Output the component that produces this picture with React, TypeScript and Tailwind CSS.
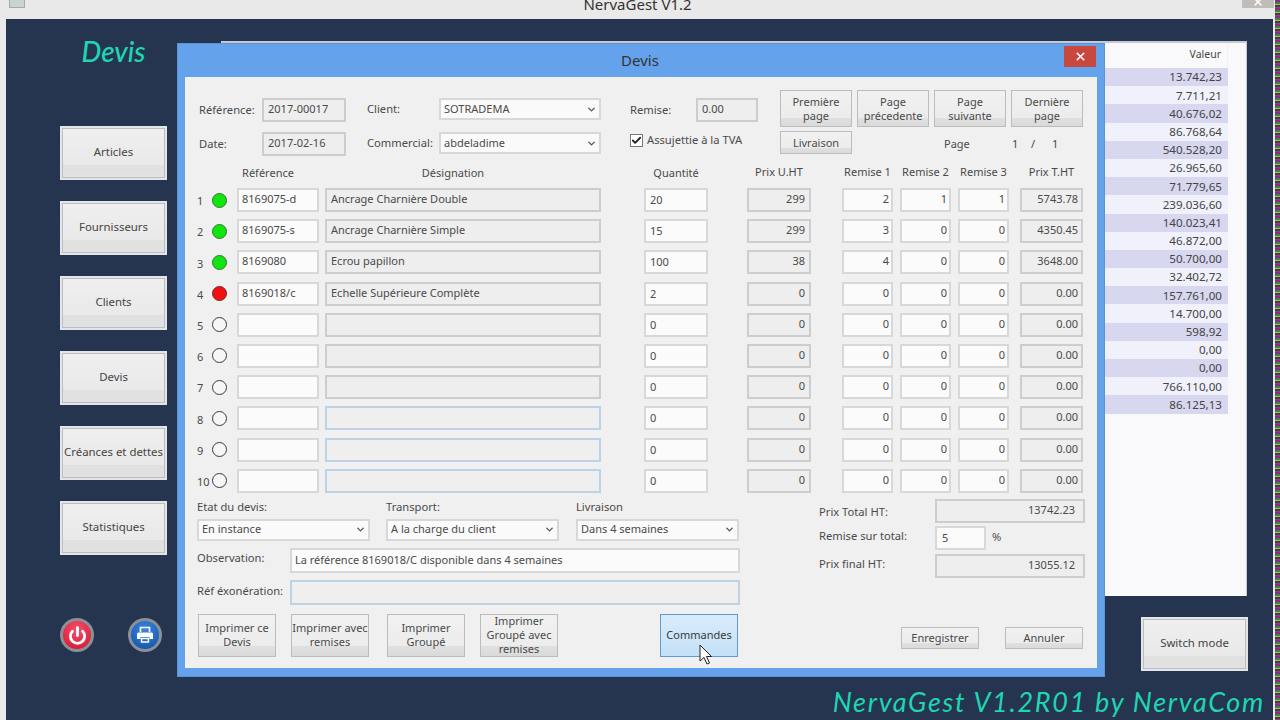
import React from 'react';
import { ChevronDown, Check, Power, X } from 'lucide-react';

const font = 'font-["Noto_Sans","Liberation_Sans",sans-serif]';
const script = 'font-["Lato","Open_Sans",sans-serif] italic text-[#1fd6b0]';

const tableValues = [
  '13.742,23', '7.711,21', '40.676,02', '86.768,64', '540.528,20', '26.965,60',
  '71.779,65', '239.036,60', '140.023,41', '46.872,00', '50.700,00', '32.402,72',
  '157.761,00', '14.700,00', '598,92', '0,00', '0,00', '766.110,00', '86.125,13',
];
const clippedRows = [3, 7, 8, 18];

interface LineData {
  ref: string;
  name: string;
  qty: string;
  price: string;
  r1: string;
  r2: string;
  r3: string;
  total: string;
  status: 'green' | 'red' | 'none';
}

const lines: LineData[] = [
  { ref: '8169075-d', name: 'Ancrage Charnière Double', qty: '20', price: '299', r1: '2', r2: '1', r3: '1', total: '5743.78', status: 'green' },
  { ref: '8169075-s', name: 'Ancrage Charnière Simple', qty: '15', price: '299', r1: '3', r2: '0', r3: '0', total: '4350.45', status: 'green' },
  { ref: '8169080', name: 'Ecrou papillon', qty: '100', price: '38', r1: '4', r2: '0', r3: '0', total: '3648.00', status: 'green' },
  { ref: '8169018/c', name: 'Echelle Supérieure Complète', qty: '2', price: '0', r1: '0', r2: '0', r3: '0', total: '0.00', status: 'red' },
  ...Array.from({ length: 6 }, () => ({ ref: '', name: '', qty: '0', price: '0', r1: '0', r2: '0', r3: '0', total: '0.00', status: 'none' as const })),
];

function Field({ className = '', children }: { className?: string; children?: React.ReactNode }) {
  return <div className={`h-6 shrink-0 border-2 text-[11px] leading-[17px] whitespace-nowrap overflow-hidden ${className}`}>{children}</div>;
}

const white = 'bg-[#fbfbfb] border-[#d8d8d8]';
const gray = 'bg-[#eeeeee] border-[#cdcdcd]';
const blue = 'bg-[#efefef] border-[#bdd2e4]';

function Select({ className = '', children }: { className?: string; children: React.ReactNode }) {
  return (
    <div className={`h-[22px] shrink-0 flex items-center justify-between pl-[3px] pr-[2px] bg-[#fafafa] border-2 border-[#d8d8d8] text-[11px] whitespace-nowrap ${className}`}>
      <span>{children}</span>
      <ChevronDown size={11} strokeWidth={3} className="text-[#555]" />
    </div>
  );
}

function WinButton({ className = '', children }: { className?: string; children: React.ReactNode }) {
  return (
    <div className={`shrink-0 flex items-center justify-center text-center text-[11px] leading-[14px] border border-[#bcbcbc] bg-[linear-gradient(#f1f1f1,#ececec_76%,#e0e0e0_76%,#dadada)] ${className}`}>
      {children}
    </div>
  );
}

function NavButton({ children }: { children: React.ReactNode }) {
  return (
    <div className="w-[107px] h-[54px] shrink-0 flex items-center justify-center pb-[2px] text-[11.4px] text-[#444] border-2 border-[#e2e5ea] shadow-[inset_0_0_0_1px_#bdbdbd] bg-[linear-gradient(#efefef,#e9e9e9_74%,#e0e0e0_74%,#e2e2e2)]">
      {children}
    </div>
  );
}

function StatusDot({ status }: { status: LineData['status'] }) {
  const colour = status === 'green' ? 'bg-[#12e412] border-[#2c7a2c]' : status === 'red' ? 'bg-[#f20f12] border-[#7a2222]' : 'bg-[#f6f6f6] border-[#3a3a3a]';
  return <div className={`w-[15px] h-[15px] shrink-0 rounded-full border ${colour}`} />;
}

function Line({ line, index }: { line: LineData; index: number }) {
  const nameBorder = index >= 7 ? blue : gray;
  return (
    <div className="flex items-center h-6">
      <div className="w-[15px] shrink-0 pt-[3px] text-[11px]">{index + 1}</div>
      <StatusDot status={line.status} />
      <Field className={`ml-[10px] w-[82px] pl-[3px] ${white}`}>{line.ref}</Field>
      <Field className={`ml-[6px] w-[276px] pl-1 ${nameBorder}`}>{line.name}</Field>
      <Field className={`ml-[43px] w-16 pl-1 leading-[19px] ${white}`}>{line.qty}</Field>
      <Field className={`ml-[39px] w-16 pr-1 text-right ${gray}`}>{line.price}</Field>
      <Field className={`ml-[31px] w-[51px] pr-[2px] text-right ${white}`}>{line.r1}</Field>
      <Field className={`ml-[7px] w-[51px] pr-[2px] text-right ${white}`}>{line.r2}</Field>
      <Field className={`ml-[7px] w-[51px] pr-[2px] text-right ${white}`}>{line.r3}</Field>
      <Field className={`ml-[11px] w-[63px] pr-[3px] text-right ${gray}`}>{line.total}</Field>
    </div>
  );
}

function DevisWindow() {
  return (
    <div className={`absolute left-[177px] top-[43px] w-[928px] h-[634px] flex flex-col bg-[#64a2ec] border border-[#5c93d6] text-[#4a4a4a] ${font}`}>
      <div className="h-[33px] shrink-0 relative flex items-center justify-center pr-[2px] text-[15px] text-[#333]">
        Devis
        <div className="absolute right-[8px] top-[2px] w-[32px] h-[21px] flex items-center justify-center bg-[#c8483f]">
          <X size={13} strokeWidth={3} className="text-white" />
        </div>
      </div>

      <div className="mx-[7px] w-[912px] h-[591px] bg-[#f0f0f0] pl-3">
        {/* header of the quote */}
        <div className="flex pt-[13px] h-[79px]">
          <div className="w-[170px] pt-2 pl-[2px] flex flex-col gap-[10px]">
            <div className="flex items-center">
              <span className="w-[63px] text-[11.2px]">Référence:</span>
              <Field className={`w-[84px] pl-1 ${gray}`}>2017-00017</Field>
            </div>
            <div className="flex items-center">
              <span className="w-[63px] text-[11.2px]">Date:</span>
              <Field className={`w-[84px] pl-1 ${gray}`}>2017-02-16</Field>
            </div>
          </div>
          <div className="w-[263px] pt-2 flex flex-col gap-3">
            <div className="flex items-center">
              <span className="w-[72px] pt-[1px] text-[11.2px]">Client:</span>
              <Select className="w-[162px]">SOTRADEMA</Select>
            </div>
            <div className="flex items-center">
              <span className="w-[72px] text-[11.2px]">Commercial:</span>
              <Select className="w-[162px]">abdeladime</Select>
            </div>
          </div>
          <div className="w-[150px] pt-2">
            <div className="flex items-center">
              <span className="w-[66px] text-[11.2px]">Remise:</span>
              <Field className={`w-[62px] pl-1 ${gray}`}>0.00</Field>
            </div>
            <div className="flex items-center mt-[10px]">
              <div className="w-[13px] h-[13px] flex items-center justify-center bg-white border border-[#777]">
                <Check size={11} strokeWidth={4} className="text-[#222]" />
              </div>
              <span className="ml-1 text-[11.2px]">Assujettie à la TVA</span>
            </div>
          </div>
          <div>
            <div className="flex gap-[5px]">
              <WinButton className="w-[72px] h-[37px]">Première<br />page</WinButton>
              <WinButton className="w-[72px] h-[37px]">Page<br />précedente</WinButton>
              <WinButton className="w-[72px] h-[37px]">Page<br />suivante</WinButton>
              <WinButton className="w-[72px] h-[37px]">Dernière<br />page</WinButton>
            </div>
            <div className="flex items-center mt-1">
              <WinButton className="w-[72px] h-[23px]">Livraison</WinButton>
              <div className="ml-[92px] pt-[3px] flex text-[11px]">
                <span className="w-[68px]">Page</span>
                <span className="w-[19px]">1</span>
                <span className="w-[21px]">/</span>
                <span>1</span>
              </div>
            </div>
          </div>
        </div>

        {/* column titles */}
        <div className="flex h-8 pt-[8px] text-[11px] text-center">
          <span className="ml-[30px] w-[82px] pt-[1px]">Référence</span>
          <span className="ml-[16px] w-[256px] pt-[1px]">Désignation</span>
          <span className="ml-[63px] w-16 pt-[1px]">Quantité</span>
          <span className="ml-[39px] w-16">Prix U.HT</span>
          <span className="ml-[31px] w-[51px]">Remise 1</span>
          <span className="ml-[7px] w-[51px]">Remise 2</span>
          <span className="ml-[7px] w-[51px]">Remise 3</span>
          <span className="ml-[11px] w-[63px]">Prix T.HT</span>
        </div>

        <div className="flex flex-col gap-y-[7.2px]">
          {lines.map((line, index) => (
            <Line key={index} line={line} index={index} />
          ))}
        </div>

        {/* footer of the quote */}
        <div className="flex mt-[6px]">
          <div className="w-[622px] shrink-0">
            <div className="flex text-[11.2px]">
              <div className="w-[189px]">
                <div className="h-5">Etat du devis:</div>
                <Select className="w-[173px]">En instance</Select>
              </div>
              <div className="w-[190px]">
                <div className="h-5">Transport:</div>
                <Select className="w-[173px]">A la charge du client</Select>
              </div>
              <div>
                <div className="h-5">Livraison</div>
                <Select className="w-[163px]">Dans 4 semaines</Select>
              </div>
            </div>
            <div className="flex items-center mt-[7px]">
              <span className="w-[93px] pb-[3px] text-[11.2px]">Observation:</span>
              <Field className={`w-[450px] h-[25px] pl-[3px] leading-[19px] ${white}`}>La référence 8169018/C disponible dans 4 semaines</Field>
            </div>
            <div className="flex items-center mt-[7px]">
              <span className="w-[93px] pb-[1px] text-[11.2px]">Réf éxonération:</span>
              <Field className={`w-[450px] h-[25px] ${blue}`} />
            </div>
            <div className="flex mt-[9px] ml-[1px] relative">
              <WinButton className="w-[78px] h-[43px]">Imprimer ce<br />Devis</WinButton>
              <WinButton className="ml-[15px] w-[78px] h-[43px]">Imprimer avec<br />remises</WinButton>
              <WinButton className="ml-[18px] w-[78px] h-[43px]">Imprimer<br />Groupé</WinButton>
              <WinButton className="ml-[15px] w-[78px] h-[43px]">Imprimer<br />Groupé avec<br />remises</WinButton>
              <div className="ml-[102px] w-[78px] h-[43px] shrink-0 flex items-center justify-center text-[11px] text-[#3a3a3a] border border-[#5c9cd0] bg-[linear-gradient(#d9ecfb,#c4e0f7)]">
                Commandes
              </div>
              <svg className="absolute left-[501px] top-[30px]" width="14" height="22" viewBox="0 0 14 22">
                <path d="M1 1 L1 17 L5 13.5 L8 20 L10.5 19 L7.5 12.5 L12.5 12.5 Z" fill="#fff" stroke="#222" strokeWidth="1" />
              </svg>
            </div>
          </div>
          <div className="pb-2 flex flex-col">
            <div className="flex items-center">
              <span className="w-[116px] text-[11.2px] pt-[3px]">Prix Total HT:</span>
              <Field className={`w-[150px] pr-[8px] text-right ${gray}`}>13742.23</Field>
            </div>
            <div className="flex items-center mt-[3px]">
              <span className="w-[116px] pb-[2px] text-[11.2px]">Remise sur total:</span>
              <Field className={`w-[51px] pl-[5px] leading-[19px] ${white}`}>5</Field>
              <span className="ml-[6px] text-[11.2px]">%</span>
            </div>
            <div className="flex items-center mt-1">
              <span className="w-[116px] pb-[3px] text-[11.2px]">Prix final HT:</span>
              <Field className={`w-[150px] pr-[8px] text-right ${gray}`}>13055.12</Field>
            </div>
            <div className="flex mt-auto ml-[82px]">
              <WinButton className="w-[78px] h-[22px]">Enregistrer</WinButton>
              <WinButton className="ml-[26px] w-[78px] h-[22px]">Annuler</WinButton>
            </div>
          </div>
        </div>
      </div>
    </div>
  );
}

export default function App() {
  return (
    <div className={`relative w-[1280px] h-[720px] overflow-hidden flex bg-[#e9e9e9] ${font}`}>
      <div className="w-[1275px] shrink-0 flex flex-col">
        {/* window title bar, cut by the top of the capture */}
        <div className="h-[19px] shrink-0 relative flex justify-center">
          <div className="absolute left-[9px] top-0 w-4 h-2 bg-[#c9d4d0] border border-[#a8a8a8] border-t-0" />
          <span className="-mt-[7px] text-[15px] text-[#333]">NervaGest V1.2</span>
          <div className="absolute right-[1px] top-0 w-[32px] h-2 flex items-center justify-center bg-[#bfbcba] overflow-hidden">
            <X size={12} strokeWidth={3} className="text-white -mt-[5px]" />
          </div>
        </div>

        <div className="flex-1 ml-[6px] mr-[2px] flex bg-[#253550]">
          <div className="w-[215px] shrink-0 pl-[54px] flex flex-col">
            <div className={`w-[107px] mt-[12px] h-[41px] text-center text-[28px] leading-[41px] font-medium ${script}`}>Devis</div>
            <div className="mt-[54px] flex flex-col gap-[21px]">
              <NavButton>Articles</NavButton>
              <NavButton>Fournisseurs</NavButton>
              <NavButton>Clients</NavButton>
              <NavButton>Devis</NavButton>
              <NavButton>Créances et dettes</NavButton>
              <NavButton>Statistiques</NavButton>
            </div>
            <div className="mt-[63px] flex gap-[34px]">
              <div className="w-[34px] h-[34px] rounded-full flex items-center justify-center border-[3px] border-[#8b8f96] bg-[radial-gradient(circle_at_50%_30%,#f4506a,#d5122f)]">
                <Power size={19} strokeWidth={3.5} className="text-white" />
              </div>
              <div className="w-[34px] h-[34px] rounded-full flex items-center justify-center border-[3px] border-[#8b8f96] bg-[radial-gradient(circle_at_50%_30%,#3a86de,#0f4fa8)]">
                <svg width="20" height="20" viewBox="0 0 20 20">
                  <path d="M5.5 7V2.5h9V7" fill="none" stroke="#fff" strokeWidth="1.6" />
                  <path d="M3.5 7.5h13a1.5 1.5 0 0 1 1.5 1.5v5h-3.5v-2h-9v2H2V9a1.5 1.5 0 0 1 1.5-1.5z" fill="#fff" />
                  <path d="M6.5 13.5h7v3.5h-7z" fill="none" stroke="#fff" strokeWidth="1.4" />
                </svg>
              </div>
            </div>
          </div>

          <div className="flex-1 pt-[22px] pr-[26px] flex flex-col">
            <div className="w-[1026px] h-[555px] shrink-0 bg-[#f9f9fc] border-t-2 border-r border-[#c8c8d4] text-[#444]">
              <div className="h-6 w-[1007px] flex items-center justify-end pr-[6px] text-[10.5px] border-r border-[#f0f0f4]">Valeur</div>
              <div className="mt-[1px] w-[1007px]">
                {tableValues.map((value, index) => (
                  <div key={index} className={`h-[18.2px] flex items-center justify-end relative pr-[6px] text-[11.6px] ${index % 2 === 0 ? 'bg-[#d7d7ef]' : 'bg-[#f1f1fb]'}`}>
                    {clippedRows.includes(index) && <span className="absolute left-[881px] text-[#888]">:</span>}
                    {value}
                  </div>
                ))}
              </div>
            </div>
            <div className="mt-[21px] self-end -mr-px">
              <NavButton>Switch mode</NavButton>
            </div>
            <div className={`mt-[15px] -mr-[18px] self-end whitespace-nowrap text-[27px] leading-8 tracking-[1.7px] ${script}`}>
              NervaGest V1.2R01 by NervaCom
            </div>
          </div>
        </div>
      </div>

      <div className="w-[5px] shrink-0 bg-[repeating-linear-gradient(180deg,#8a2f7f_0_2px,#2f8a4a_2px_4px,#c9b040_4px_5px,#30405a_5px_7px,#b04060_7px_8px)]" />

      <DevisWindow />
    </div>
  );
}
